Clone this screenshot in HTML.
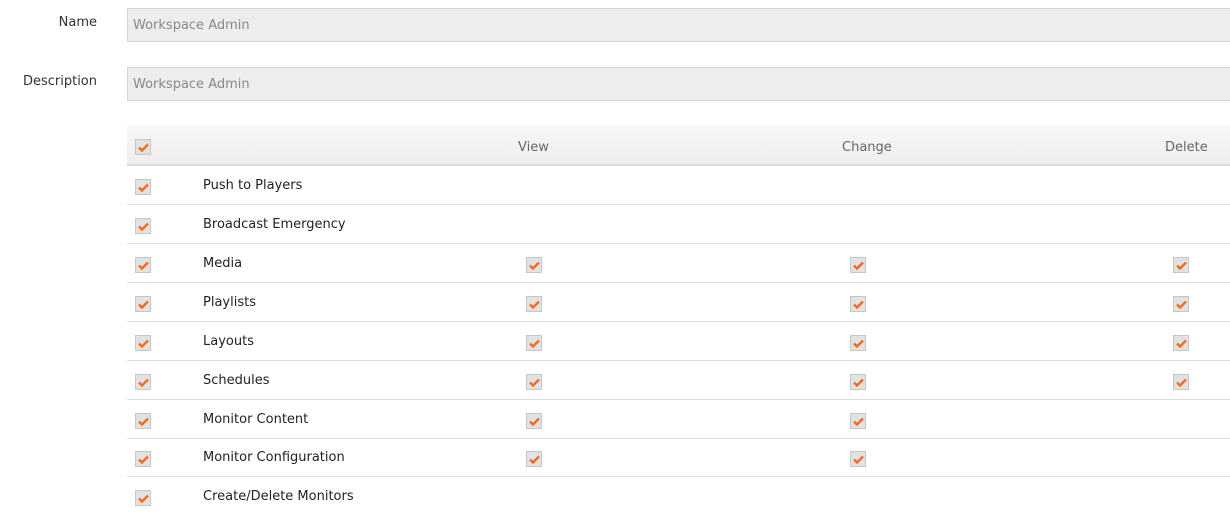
<!DOCTYPE html>
<html><head><style>
body{margin:0;width:1230px;height:514px;background:#fff;font-family:"DejaVu Sans","Liberation Sans",sans-serif;font-size:13px;color:#222;position:relative;overflow:hidden}
.a{position:absolute}
.lbl{right:1133px;text-align:right;color:#333}
.inp{left:127px;width:1103px;height:34px;background:#ededed;border:1px solid #d4d4d4;border-right:none;box-sizing:border-box;color:#888;padding-left:5px;line-height:33px;font-size:13px}
.cb{position:absolute;width:14px;height:14px;background:#e2e2e2;border:1px solid #c6c6c6}
.cb svg{position:absolute;left:2px;top:3px}
.row{position:absolute;left:127px;width:1103px;height:38px;border-bottom:1px solid #dcdcdc}
.row span{position:absolute;left:76px;top:12px;color:#222}
.hd{color:#666}
</style></head><body>
<div class="a lbl" style="top:15px">Name</div>
<div class="a inp" style="top:8px">Workspace Admin</div>
<div class="a lbl" style="top:74px">Description</div>
<div class="a inp" style="top:67px">Workspace Admin</div>
<div class="a" style="left:127px;top:126px;width:1103px;height:38px;background:linear-gradient(#f8f7f5,#efeeec);border-bottom:2px solid #dadada"></div>
<div class="a hd" style="left:518px;top:140px">View</div>
<div class="a hd" style="left:842px;top:140px">Change</div>
<div class="a hd" style="left:1165px;top:140px">Delete</div>
<div id="c"></div>
<script>
var svg='<svg width="11" height="9" viewBox="0 0 11 9"><path d="M1 4.5 L4 7.5 L10 1.5" stroke="#f26b21" stroke-width="2.4" fill="none"/></svg>';
function cb(x,y){return '<div class="cb" style="left:'+x+'px;top:'+y+'px">'+svg+'</div>';}
var h=cb(135,139);
var rows=[["Push to Players",0],["Broadcast Emergency",0],["Media",3],["Playlists",3],["Layouts",3],["Schedules",3],["Monitor Content",2],["Monitor Configuration",2],["Create/Delete Monitors",0]];
var tops=[166,205,244,283,322,361,400,438,477];
rows.forEach(function(r,i){var t=tops[i];
h+='<div class="row" style="top:'+t+'px'+(i==8?';border-bottom:none':'')+'"><span>'+r[0]+'</span></div>';
h+=cb(135,t+13);
if(r[1]>=1)h+=cb(526,t+13);
if(r[1]>=2)h+=cb(850,t+13);
if(r[1]>=3)h+=cb(1173,t+13);
});
document.getElementById('c').innerHTML=h;
</script>
</body></html>
